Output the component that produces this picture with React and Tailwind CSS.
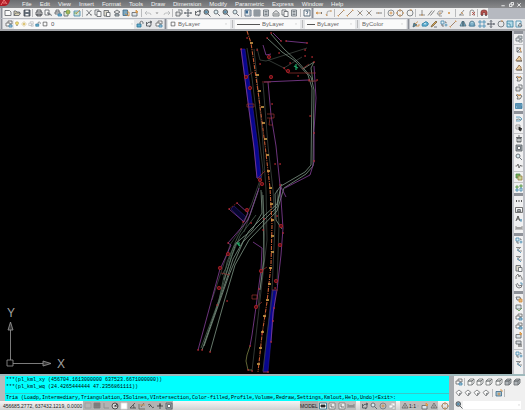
import React from "react";

const K = "#5c6064";
const B = "#3f86ad";
const O = "#d08a3c";
const G = "#5c9a4c";
const R = "#b8433a";
const L = "#b4b6b8";
const N = "none";
const W = "#fafafa";

// Each glyph is a list of [path, stroke, fill] on an 8 by 8 grid.
const GLYPHS = {
  new: [["M1 1.5H5.5L7 3V6.5H1Z", K, W]],
  open: [["M1 6.5V2H3L4 3H6.5V4M1 6.5L2.5 4H7.5L6 6.5Z", K, "#ded6b8"]],
  save: [["M1 1H7V7H1Z", "#3c434b", "#68727c"], ["M2.5 1.5H5.5V3H2.5ZM2.5 5H5.5V6.5H2.5Z", N, W]],
  print: [["M2 3V1H6V3M1 3H7V6H1ZM2 5H6V7H2Z", "#44484c", "#e0e0e0"]],
  preview: [["M1 1H5V6H1Z", K, W], ["M4 3A1.5 1.5 0 1 0 6.5 5L7.5 7M4 4L6 5", K, N]],
  publish: [["M1 3H6V5H1ZM2 3V1H5V3", K, "#ddd"], ["M4 5H7.5V7H4Z", B, "#6caed0"]],
  globe: [["M1 2.5H5V7H1Z", K, "#dfe7d8"], ["M3 3A2 2 0 1 0 7 3A2 2 0 1 0 3 3M3 3H7", G, "#e4c35c"]],
  sheet: [["M1 2H7V7H1Z", B, "#cfe0cf"], ["M3 5L7 1", O, N], ["M1 4H4", G, N]],
  cut: [["M1.5 1L6 6M6.5 1L2 6M1 6H2.5M5.5 6H7", K, N]],
  copy: [["M1 1H5V6H1Z", K, W], ["M3 2.5H7V7.5H3Z", K, W]],
  paste: [["M1 1.5H5.5V7H1Z", K, "#ddd9cc"], ["M3.5 3.5H7V7.5H3.5Z", K, W]],
  match: [["M1 3L4 1L7 3L4 5Z", K, "#ddd"], ["M2 5H6V7H2Z", K, "#b5c4cb"]],
  layers: [["M1 1H5.5V6.5H1Z", "#3d6786", "#7ba7c0"], ["M3 5L7 7", O, N], ["M5 3H7V7", O, N]],
  block: [["M1 3.5H6V7H1Z", K, "#dce4ea"], ["M5 1L7 3L5 4Z", O, "#f2c06a"]],
  undo: [["M3 2L1 4L3 6M1 4H5Q7 4 7 6", L, N]],
  redo: [["M5 2L7 4L5 6M7 4H3Q1 4 1 6", L, N]],
  down: [["M2.5 3.5H5.5L4 5Z", N, "#888"]],
  move: [["M4 .5V7.5M.5 4H7.5M3 1.5L4 .5L5 1.5M3 6.5L4 7.5L5 6.5M1.5 3L.5 4L1.5 5M6.5 3L7.5 4L6.5 5", "#404850", N]],
  pan: [["M1 3H5V7H1Z", K, "#ddd"], ["M3 1H7V5H5", K, N]],
  orbit: [["M1.5 2V6H5.5M5 1L7 2L5 3M2 4Q2 2 6 2M6 3Q7 6 4 7", "#444a50", N]],
  zoom: [["M1 3A2 2 0 1 0 5 3A2 2 0 1 0 1 3M4.5 4.5L7 7", "#505860", "#d9ecf1"]],
  zoomDark: [["M1 3A2.3 2.3 0 1 0 5.6 3A2.3 2.3 0 1 0 1 3M5 5L7.5 7.5", "#3c4348", "#95a5ad"], ["M2 3H4.5M3.2 2V4", B, N]],
  panel: [["M1 1H7V7H1Z", "#4c6176", "#dfe6ea"], ["M1.5 1.5H4V4.5H1.5Z", N, "#3b6a92"], ["M5 3H6.5M5 5H6.5", K, N]],
  grid: [["M1 1H7V7H1ZM1 3H7M1 5H7M3 1V7M5 1V7", "#667078", "#e0e4e6"]],
  calc: [["M1.5 1H6.5V7H1.5ZM2.5 2.5H5.5M2.5 4H5.5M2.5 5.5H5.5", "#666d73", "#dde1e4"]],
  roof: [["M1 4L4 1.5L7 4V7H1ZM2 5H6", "#686e72", "#ddd"]],
  help: [["M1 1H7V7H1Z", "#3b5063", W], ["M3 3Q3 2 4 2Q5.3 2 5 3.2L4 4V5M4 5.7V6.3", "#33506a", N]],
  arrow: [["M1 4H7M3 3L1 4L3 5", O, N], ["M6.5 3V5", K, N]],
  corner: [["M2 7V4Q2 2 4 2H6", "#999", N], ["M1 5L2 7M6 1V3", O, N]],
  line: [["M1.5 6.5L6.5 1.5", "#8a6a50", N], ["M1 6V7H2M6 1H7V2", O, N]],
  cross: [["M1.5 1.5L6.5 6.5M6.5 1.5L1.5 6.5", "#777", N], ["M3.5 3.5L4.5 4.5", O, N]],
  dash: [["M1 4H7", "#666", N], ["M3 4H4", O, N]],
  circle: [["M1 4A3 3 0 1 0 7 4A3 3 0 1 0 1 4", "#71777b", N], ["M3 4A1 1 0 1 0 5 4A1 1 0 1 0 3 4", O, N]],
  hollow: [["M1 4A3 3 0 1 0 7 4A3 3 0 1 0 1 4", "#666c70", N], ["M4 1H6", O, N]],
  ring: [["M1 4A3 3 0 1 0 7 4A3 3 0 1 0 1 4", "#777", N], ["M4 .5L5 1.5L4 2.5L3 1.5ZM4 5.5L5 6.5L4 7.5L3 6.5ZM1 3V5M7 3V5", O, N]],
  perp: [["M4 1V6M1 6H7", "#777", N], ["M3 6H5", O, N]],
  parallel: [["M1 6.5L5 1.5M3.5 6.5L7.5 1.5", "#666", N]],
  insert: [["M1 5L3 2H7L5 5ZM3 5V7H6", "#888", N], ["M3 4H5", O, N]],
  dot: [["M3.5 3.5H4.5V4.5H3.5Z", O, O]],
  near: [["M2 6L6 1M1 6H6", "#777", N], ["M3 3L5 5", O, N]],
  noSnap: [["M2 7V3Q2 1 4 1Q6 1 6 3V7", "#777", N], ["M4 3L7 6M7 3L4 6", R, N]],
  magnet: [["M1 6V3Q1 1 4 1Q7 1 7 3V6H5V3.5H3V6Z", "#7d3a3a", "#b8504a"], ["M1 6.5H3M5 6.5H7", K, N]],
  bulb: [["M4 1Q6.5 1 6 3.5L5 5H3L2 3.5Q1.5 1 4 1Z", "#b19c46", "#f0dc72"], ["M3 6H5", K, N]],
  sun: [["M2.5 4A1.5 1.5 0 1 0 5.5 4A1.5 1.5 0 1 0 2.5 4M4 .5V1.5M4 6.5V7.5M.5 4H1.5M6.5 4H7.5M1.5 1.5L2 2M6 6L6.5 6.5M6 2L6.5 1.5M1.5 6.5L2 6", "#c2a24c", "#f5e08c"]],
  lock: [["M1 4H5V7H1Z", "#2f7494", "#63afd0"], ["M4 4V2Q5.5 .5 7 2V4", K, N]],
  stack: [["M3 1H7V4H3Z", "#666", "#eee"], ["M1 3H5V6H1Z", "#666", W], ["M4 5H7V7H4Z", B, "#a9cadd"]],
  stackGray: [["M3 1H7V4H3Z", L, W], ["M1 3H5V6H1ZM4 5H7V7H4Z", L, W]],
  windows: [["M3 1H7V4H3Z", "#70767c", "#c9d0d6"], ["M1 3H5V6H1Z", "#70767c", "#dfe3e6"], ["M4 5H7V7H4Z", "#70767c", W]],
  square: [["M1.5 1.5H6.5V6.5H1.5Z", "#333", W]],
  brush: [["M1 7L2 3L5 5Z", "#45606a", "#5a8a9c"], ["M3 4L6 1.5M4 6H7V4", O, N]],
  cloud: [["M1 5Q1 3 3 3Q4 1 6 2Q8 3 7 5Q5 7 3 6Q1 7 1 5Z", "#27779e", "#64b2d4"], ["M3 4Q4 3 5 4", W, N]],
  pencil: [["M1 7L2 5L6 1L7 2L3 6Z", "#79613c", "#d1a456"], ["M4 7H7", K, N]],
  nodes: [["M1 1H4V4H1ZM5 5A1 1 0 1 0 7 5A1 1 0 1 0 5 5", B, "#e4eef2"], ["M2 4V6H4M5 2H6V3", K, N]],
  cone: [["M3.5 1L1 6H3.5Z", "#3b697f", "#9cbecf"], ["M4.5 1L7 6H4.5ZM4 1V7", "#536c78", "#65a6c6"]],
  shape: [["M1 6L2 2Q4 0 6 2L7 6Z", "#466e84", "#a8d0e0"], ["M2 4H6V6H2Z", "#4c89aa", N]],
  array: [["M1 1H3V3H1ZM5 1H7V3H5ZM1 5H3V7H1ZM5 5H7V7H5Z", "#3f86ad", "#e3eef2"]],
  scale: [["M1 1H7V7H1Z", "#36809f", "#b3dae8"], ["M1 4H4V7", "#36809f", W]],
  edit: [["M1 1H6V7H1Z", "#458cab", "#e2f0f5"], ["M3 6L5 3L7 6Z", K, W]],
  axes: [["M2 1V6H7M2 2H6L2 6", K, N], ["M5 2L6 6", O, N]],
  ramp: [["M1 6Q1 4 3 3L4 1L6 3V5L7 6Z", "#8b6745", "#eed0a1"], ["M2 6H7", K, N]],
  star: [["M1 2L3 4L2 6H5L7 3L5 2Z", K, "#eee3d1"], ["M2 1L4 3L6 1", O, N]],
  world: [["M.5 1.5H7V6.5H.5Z", "#397ba2", "#83b5d0"], ["M1 3H6M2 5H7", "#25638b", N]],
  flow: [["M1 2H5L7 4L5 6H1", "#4c91b3", "#d7e8ee"], ["M1 5Q3 3 6 5", "#777", N]],
  cursor: [["M1 1H5V5H1ZM2 3H4", "#888", W], ["M4 3L7 5L5.5 5.5L6 7L4 6Z", "#222", "#222"]],
  trash: [["M2 3H6V7H2ZM1 2.5H7M3 1H5", "#4c5054", "#999d9f"], ["M3 4V6M5 4V6", W, N]],
  frame: [["M1 1H7V7H1Z", "#52585d", "#a6adb2"], ["M2.5 2.5H5.5V5.5H2.5Z", "#52585d", W]],
  pulse: [["M.5 4H2L3 2L4 6L5.5 3L6 4H7.5", "#555", N]],
  green: [["M1 1H5V5H1Z", "#468644", "#75aa58"], ["M3 3H7V7H3Z", "#997e41", "#c8d69a"]],
  people: [["M1 2H3V4H1ZM5 1H7V3H5Z", G, "#bcd9ad"], ["M1 5H3V7H1ZM5 4H7V7H5Z", B, "#d5e8ef"]],
  dots: [["M1 3H2V5H1ZM3.5 3H4.5V5H3.5ZM6 3H7V5H6Z", N, "#555"]],
  picture: [["M.5 1.5H7.5V6.5H.5Z", "#555", W], ["M2 5.5L3 3L4 4L5 3L6 5.5Z", K, "#aaa"]],
  text: [["M1 6L3 1L5 6M2 4H4", "#333", N], ["M5 5H7M6 4V7", B, N]],
  dims: [["M1 2V6M7 2V6M1 4H7M3 3V6M5 3V6", "#777", N]],
  branch: [["M1 1.5H5M3 1V5H7M4 3L6 1", "#777", N], ["M4 5L6 7M2 4H4", B, N]],
  hand: [["M1 6V3L3 1L4 4L5 2L7 5V7", "#686868", "#eee"]],
  target: [["M1 2Q1 6 4 6Q7 6 7 3L4 4L2 1", K, "#eee"], ["M5 1H7V3", B, N]],
  dbOrange: [["M1 2H5L6 5H2Z", K, "#d8dde0"], ["M4 4H7V7H4Z", O, "#e2b678"]],
  dbGreen: [["M1 1H6V5H1Z", K, "#dce6e9"], ["M2 5L4 7L7 4", G, N]],
  dbPause: [["M1 1H6V4H1Z", K, "#d5d9dc"], ["M4 4V7M6 4V7", "#222", N]],
  cube: [["M1 3L3 1H7L5 3ZM1 3H5V7H1ZM5 3L7 1V5L5 7", "#6b6e70", W]],
  cubeDark: [["M1 3L3 1H7L5 3ZM1 3H5V7H1ZM5 3L7 1V5L5 7", "#65696c", "#b0b5b9"]],
  iso: [["M4 1L7 3.5L4 7L1 3.5Z", "#707274", W], ["M4 4L7 3.5L4 7Z", N, "#8a8d90"]],
  camera: [["M1 2.5H6.5V7H1Z", "#3b6c8c", "#a6c1d1"], ["M3 5A1 1 0 1 0 5 5A1 1 0 1 0 3 5M5 1H7V3", O, N]],
  snap: [["M1 1H7V6H1Z", "#999", "#b4b4b4"]],
  gridDark: [["M1 1H7V6H1ZM1 3H7M3 1V6M5 1V6", "#777", "#888"]],
  ortho: [["M2 1V6H7", "#888", N]],
  polar: [["M1 4A3 3 0 1 0 7 4A3 3 0 1 0 1 4M4 4H7M4 4L6 2M3 4H5", "#333", "#d5d5d5"]],
  white: [["M1 1H7V7H1Z", "#ddd", "#fff"]],
  angle: [["M6 1L1 6H7M4 3Q5 4 5 6", "#444", N]],
  dyn: [["M1 7V2M1 7H7M3 5L6 1", "#66625b", N], ["M2 3L7 3", O, N]],
  weight: [["M1 3Q3 1 4 4Q6 7 7 5M2 5L4 3", "#444", N]],
  plus: [["M4 1V7M1 4H7M3 3H5", "#333", N]],
  layout: [["M.5 1H7.5V7H.5Z", "#266d88", W], ["M2 3H6V5H2Z", "#222", "#333"]],
  sheetCorner: [["M1 1H7V7H1Z", "#777", "#ededed"], ["M3 2V5H6", "#555", N]],
  scaleTri: [["M4 1L7 6H1ZM4 3V6", "#666", N]],
};

function Glyph({ name, className = "size-2" }) {
  return (
    <svg viewBox="0 0 8 8" className={`${className} shrink-0`} aria-hidden="true">
      {GLYPHS[name].map(([d, stroke, fill], i) => (
        <path key={i} d={d} stroke={stroke} fill={fill} strokeWidth="0.8" strokeLinejoin="round" />
      ))}
    </svg>
  );
}

function Tool({ name }) {
  return (
    <button type="button" aria-label={name} className="flex size-[9px] shrink-0 items-center justify-center">
      <Glyph name={name} />
    </button>
  );
}

function Group({ names, className = "" }) {
  return (
    <div className={`flex shrink-0 items-center justify-between ${className}`}>
      {names.split(" ").map((n, i) => <Tool key={i} name={n} />)}
    </div>
  );
}

const Sep = () => <span className="mx-px h-2 w-px shrink-0 bg-[#b9babc]" />;
const Grip = () => <span className="h-full w-[3px] shrink-0 border-x border-[#bfc1c6] bg-[#8c9098]" />;
const Bar = () => <span className="h-[3px] w-full shrink-0 bg-[#8f9299]" />;

function Combo({ label, value, line, swatch, className }) {
  return (
    <label className={`flex h-[9px] shrink-0 items-center gap-[2px] bg-[#fafafa] px-[2px] text-[#666] ${className}`}>
      {swatch && <Glyph name="square" className="size-[6px]" />}
      {line && <span className="h-px flex-1 bg-[#555]" />}
      <select
        aria-label={label}
        defaultValue={value}
        className={`appearance-none bg-transparent text-[6px] leading-[8px] outline-none ${line ? "mr-2 w-[22px]" : "w-6"}`}
      >
        <option>{value}</option>
      </select>
      <span className="ml-auto"><Glyph name="down" className="size-1" /></span>
    </label>
  );
}

const MENUS = ["File", "Edit", "View", "Insert", "Format", "Tools", "Draw", "Dimension", "Modify", "Parametric", "Express", "Window", "Help"];

function MenuBar() {
  return (
    <header className="flex h-2 shrink-0 items-center bg-linear-to-b from-[#6b6d70] to-[#88898b] text-[6px] leading-[8px] text-[#f2f2f2]">
      <svg viewBox="0 0 12 8" className="h-2 w-3" aria-hidden="true">
        <path d="M0 0H10Q9 5 5 6H0Z" fill="#ae1c25" />
        <path d="M1 5L4 0L7 4M3 3H6" stroke="#ed7777" fill="none" />
      </svg>
      <nav className="ml-[10px] flex gap-2">
        {MENUS.map((m) => <button type="button" key={m}>{m}</button>)}
      </nav>
      <div className="ml-auto flex gap-[3px] pr-[3px]">
        {["M0 4H4", "M0 2H3V5H0ZM2 2V0H5V3H3", "M0 1L4 5M4 1L0 5"].map((d, i) => (
          <button type="button" key={d} aria-label={["Minimize", "Restore", "Close"][i]}>
            <svg viewBox="-0.5 -0.5 6 6" className="size-[5px]"><path d={d} stroke="#fff" fill="none" /></svg>
          </button>
        ))}
      </div>
    </header>
  );
}

function TopToolbars() {
  return (
    <div className="flex shrink-0 flex-col gap-px overflow-hidden border-b-2 border-[#a3a5a9] bg-[#b6b9c0]">
      <div className="flex h-[10px]">
        <div className="flex items-center bg-[#f1f1f1]">
          <Grip />
          <Group names="new open save" className="w-7" /><Sep />
          <Group names="print preview publish globe sheet" className="w-[47px]" /><Sep />
          <Group names="cut copy paste match layers block" className="w-[56px]" /><Sep />
          <Group names="undo down redo" className="w-7" /><Sep />
          <Group names="pan move orbit zoomDark zoom zoomDark zoom" className="w-[66px]" /><Sep />
          <Group names="panel grid calc roof copy calc" className="w-[56px]" /><Sep />
          <Group names="help" /><Grip />
          <Group names="arrow corner" className="w-[19px]" /><Sep />
          <Group names="line line cross cross dash" className="w-[47px]" /><Sep />
          <Group names="circle ring hollow" className="w-7" /><Sep />
          <Group names="perp parallel insert dot" className="w-[37px]" /><Sep />
          <Group names="near noSnap" className="w-[19px]" /><Sep />
          <Group names="magnet" />
        </div>
      </div>
      <div className="flex h-[10px] items-center gap-px bg-[#e6e7e9]">
        <Grip />
        <Tool name="stack" />
        <label className="flex h-[9px] w-[120px] shrink-0 items-center bg-[#fafafa] text-[#555]">
          {["bulb", "sun", "stackGray", "lock", "square"].map((n) => <Glyph key={n} name={n} className="mr-px size-[6px]" />)}
          <select aria-label="Layer" className="ml-[2px] w-[70px] appearance-none bg-transparent text-[6px] leading-[8px]"><option>0</option></select>
          <span className="ml-auto"><Glyph name="down" className="size-1" /></span>
        </label>
        <Group names="lock orbit stack" className="w-7" />
        <Grip />
        <Combo label="Color" value="ByLayer" swatch className="w-[62px]" /><Sep />
        <Combo label="Linetype" value="ByLayer" line className="w-[65px]" /><Sep />
        <Combo label="Lineweight" value="ByLayer" line className="w-[50px]" /><Sep />
        <Combo label="Plot style" value="ByColor" className="w-[46px]" />
        <Grip />
        <Group names="brush cloud pencil nodes line cone shape array move hollow scale edit" className="w-[113px]" />
      </div>
    </div>
  );
}

const RED_MARKS = [
  [246, 77], [250, 88], [269, 57], [271, 77], [288, 71], [247, 210], [260, 180], [262, 184], [228, 254],
  [220, 268], [219, 288], [276, 281], [281, 226], [280, 245], [256, 307], [261, 271],
];
const RED_DOTS = [
  [241, 49], [247, 38], [271, 33], [267, 38], [281, 41], [286, 41], [307, 43], [305, 50], [305, 56], [312, 57], [314, 62],
  [284, 68], [298, 76], [309, 80], [317, 80], [279, 53], [290, 63], [272, 104], [310, 116], [314, 133], [314, 161],
  [280, 185], [280, 164], [275, 164], [237, 203], [229, 209], [243, 222], [251, 223], [263, 230], [228, 243],
  [198, 350], [202, 350], [210, 352], [227, 301], [250, 346], [248, 370], [252, 371], [259, 289], [274, 308], [273, 321],
  [217, 305], [268, 372], [262, 334], [271, 342], [264, 219], [277, 216], [283, 233], [260, 64], [257, 50], [275, 288],
];
const TICKS = [
  [251, 43], [257, 75], [259, 91], [262, 107], [263, 123], [265, 139], [267, 155], [268, 171], [270, 188], [271, 204],
  [272, 220], [272, 236], [272, 252], [270, 268], [269, 284], [267, 300], [264, 316], [262, 332], [260, 348], [258, 364],
];

function Drawing() {
  return (
    <svg viewBox="0 31 512 343" className="block size-full" role="img" aria-label="Road survey plan">
      <g fill="#08068e" stroke="#31219f" strokeWidth="0.5">
        <path d="M241 49L245 49L258 146L261 178L257 178L254 146Z" />
        <path d="M272 290H276L273 320L268 372H263Z" />
        <path d="M231 209L234 206L246 217L243 221Z" fill="#07062e" />
      </g>
      <g fill="none" stroke="#3e4540" strokeWidth="0.8">
        <path d="M247 48L252 78L263 170L258 192L244 232" />
        <path d="M263 83L268 146L273 190L275 225L272 290" />
        <path d="M257 48L260 60L266 61L307 48" />
        <path d="M254 49L262 130L266 190L267 240L260 300L252 371" />
        <path d="M262 192L265 225L263 264L258 307" />
        <path d="M277 190L279 225L277 285" />
        <path d="M260 180L252 203L240 230L230 245L212 300" />
        <path d="M268 60L284 68L302 57" />
        <path d="M273 290L267 335L263 371" />
      </g>
      <g fill="none" stroke="#7d9685" strokeWidth="0.8">
        <path d="M267 38L282 52L295 61L308 75L312 88L311 165L305 172L281 186L277 204L265 215L249 231L233 259L228 275L202 350" />
        <path d="M271 34L284 49L299 63L311 77L314 90L313 166L306 174L284 188L277 211L249 240L235 265L224 302L210 352" />
        <path d="M303 69L314 62L311 68L313 82" />
        <path d="M281 188L277 207L258 226L243 242L229 275L204 346" />
        <path d="M282 184L275 194L276 220L282 229" />
        <path d="M261 190L262 213L252 230L236 243L224 280" />
        <path d="M263 195L264 260L260 290" />
      </g>
      <g fill="none" stroke="#54705f" strokeWidth="0.7">
        <path d="M258 191L250 215L238 236L227 262L219 300L201 348" />
        <path d="M256 215L240 236L231 258L226 275L216 310" />
        <path d="M244 236L234 246L226 268L222 275" />
      </g>
      <g fill="none" stroke="#86409a" strokeWidth="0.8">
        <path d="M241 49L254 148L257 178" />
        <path d="M264 82L309 80M268 82L271 115L276 146L280 185L283 228L281 255L277 290L273 313L271 342" />
        <path d="M314 66L316 98L314 131L314 162L310 175L285 188M281 187L286 197" />
        <path d="M259 188L248 220L228 243L231 245L222 265L220 269L198 350" />
        <path d="M237 203L248 213L244 222L229 209" />
        <path d="M253 242L262 248L261 270L256 307L252 335L250 346" />
        <path d="M273 33L281 41M286 41L307 43M263 45L266 55L271 54" />
      </g>
      <g fill="none" stroke="#9a302e" strokeWidth="0.7">
        <path d="M262 82H271M308 81H317M284 68L288 73H316M246 77L253 72M302 69L309 64" />
        <path d="M247 104H254V107H247ZM267 114H274V118H267M270 118L269 125H273M252 295H257V299H252ZM257 179L265 171" />
        <path d="M221 273L230 275M261 271L267 267M256 307L262 302M263 372H268M272 290H278" />
        <path d="M229 209L237 203" strokeDasharray="2 1" />
      </g>
      <path d="M250 346L247 355L246 361L248 370H252" fill="none" stroke="#8a914c" strokeWidth="0.7" />
      <path d="M247 31L251 43L258 91L265 145L270 188L272 225L271 265L267 302L262 335L258 372" fill="none" stroke="#c35a32" strokeWidth="1.1" strokeDasharray="4 1 1 1" />
      <path d={TICKS.map(([x, y]) => `M${x - 1} ${y}H${x + 2}`).join("")} stroke="#e0a84e" strokeWidth="1.4" />
      <path d={RED_DOTS.map(([x, y]) => `M${x - 0.6} ${y}H${x + 0.8}`).join("")} stroke="#bd2b32" strokeWidth="1.3" />
      <g fill="#611016" stroke="#bb222b" strokeWidth="0.7">
        {RED_MARKS.map(([x, y]) => <circle key={`${x}-${y}`} cx={x} cy={y} r="1.7" />)}
      </g>
      <path d="M294 66L298 68M296 64V70M237 243L240 246M239 242V246" stroke="#20a967" strokeWidth="1.2" />
      <g fill="none" stroke="#9a9a9a" strokeWidth="0.8">
        <path d="M10.5 360V323M7 360H13V366H7ZM13 363.5H50" />
        <path d="M8 330L10.5 322L13 330ZM43 361L51 363.5L43 366Z" fill="#353535" />
      </g>
      <g fill="#a2a2a2" fontFamily="Liberation Sans, sans-serif" fontSize="12">
        <text x="7" y="317">Y</text>
        <text x="57" y="368">X</text>
      </g>
    </svg>
  );
}

const SIDE = [
  ["windows"], ["axes", "ramp", "ramp"], ["star", "pan", "star", "world"], null,
  ["flow", "cursor"], ["trash", "frame", "zoom", "pulse"], ["green"], ["people"], null,
  ["dots", "picture", "text", "dims"], null,
  ["nodes", "branch", "branch", "paste", "hand", "target"], null,
  ["dbOrange", "dbGreen", "stack", "stack", "block", "dbPause"], ["nodes", "branch"],
];

function SideToolbar() {
  return (
    <aside className="flex w-[13px] shrink-0 flex-col items-center overflow-hidden border-x-2 border-[#bfc1c7] bg-[#f0f0f1]">
      <Bar />
      {SIDE.map((g, i) => g === null ? <Bar key={i} /> : (
        <div key={i} className={`flex flex-col items-center pb-px ${i > 0 && SIDE[i - 1] ? "border-t border-[#c4c4c6]" : ""}`}>
          {g.map((n, j) => <Tool key={j} name={n} />)}
        </div>
      ))}
    </aside>
  );
}

function CommandWindow() {
  return (
    <section className="flex h-[25px] flex-col border-l-[5px] border-[#b9bbbb] bg-[#00ffff] pt-px font-['Liberation_Mono',monospace] text-[5px] leading-[7px] text-black">
      <p className="whitespace-pre pl-px">***(pl_kml_xy (456704.1613000000 637523.6671000000))</p>
      <p className="whitespace-pre pl-px">***(pl_kml_wq (24.4265444444 47.2356861111))</p>
      <input
        aria-label="Command line"
        defaultValue="Tria (Loadp,Intermediary,Triangulation,ISolines,VIntersection,Color-filled,Profile,Volume,Redraw,Settings,Kmlout,Help,Undo)<Exit>:"
        className="mt-auto block h-2 w-full border-t border-[#38c9c9] bg-transparent pl-px outline-none"
      />
    </section>
  );
}

function StatusBar() {
  return (
    <footer className="flex h-[9px] shrink-0 items-center overflow-hidden bg-linear-to-b from-[#f4f4f4] to-[#d2d2d2] text-[5px] leading-[8px] text-[#222]">
      <span className="w-[83px] shrink-0 whitespace-nowrap pl-[3px]">456685.2772, 637432.1219, 0.0000</span>
      <Group names="snap gridDark ortho polar white angle dyn weight plus frame" className="h-full w-[90px] bg-[#b2b2b2]" />
      <span className="flex-1" />
      <button type="button" className="h-full w-[18px] bg-[#aaa] text-center">MODEL</button>
      <Group names="layout sheetCorner sheetCorner dims" className="h-full w-[38px] bg-[#bcbcbc]" />
      <Group names="orbit zoom circle stackGray" className="ml-1 h-full w-9 bg-[#bcbcbc]" />
      <div className="ml-1 flex h-full items-center bg-[#bcbcbc]">
        <Tool name="scaleTri" /><span className="w-[7px]">1:1</span><Glyph name="down" className="size-1" />
        <Tool name="block" /><Tool name="scaleTri" />
      </div>
      <span className="ml-[2px]"><Tool name="ring" /></span>
    </footer>
  );
}

function ViewPanel() {
  return (
    <section className="flex w-[76px] shrink-0 flex-col border-l-[5px] border-[#a7abaf] bg-[#f0f0f0]">
      <div className="flex h-[11px] items-center">
        <Tool name="stack" /><Sep />
        <Group names="cube cube cube cube cubeDark cubeDark" className="w-[56px]" />
      </div>
      <div className="flex h-3 items-center">
        <Group names="iso iso iso iso" className="w-[37px]" /><Sep /><Tool name="camera" /><Sep />
      </div>
      <label className="flex min-h-0 flex-1 items-center pr-1">
        <Tool name="zoomDark" />
        <select aria-label="View" className="h-2 min-w-0 flex-1 appearance-none bg-white text-[5px]"><option></option></select>
        <span className="flex h-2 items-center bg-white"><Glyph name="down" className="size-1" /></span>
      </label>
    </section>
  );
}

export default function App() {
  return (
    <div className="flex h-screen flex-col overflow-hidden bg-black font-['Liberation_Sans',sans-serif]">
      <MenuBar />
      <TopToolbars />
      <div className="flex min-h-0 flex-1">
        <main className="min-w-0 flex-1 bg-black"><Drawing /></main>
        <SideToolbar />
      </div>
      <div className="flex shrink-0 border-t-2 border-[#9fb9bc]">
        <div className="flex min-w-0 flex-1 flex-col">
          <CommandWindow />
          <StatusBar />
        </div>
        <ViewPanel />
      </div>
    </div>
  );
}
